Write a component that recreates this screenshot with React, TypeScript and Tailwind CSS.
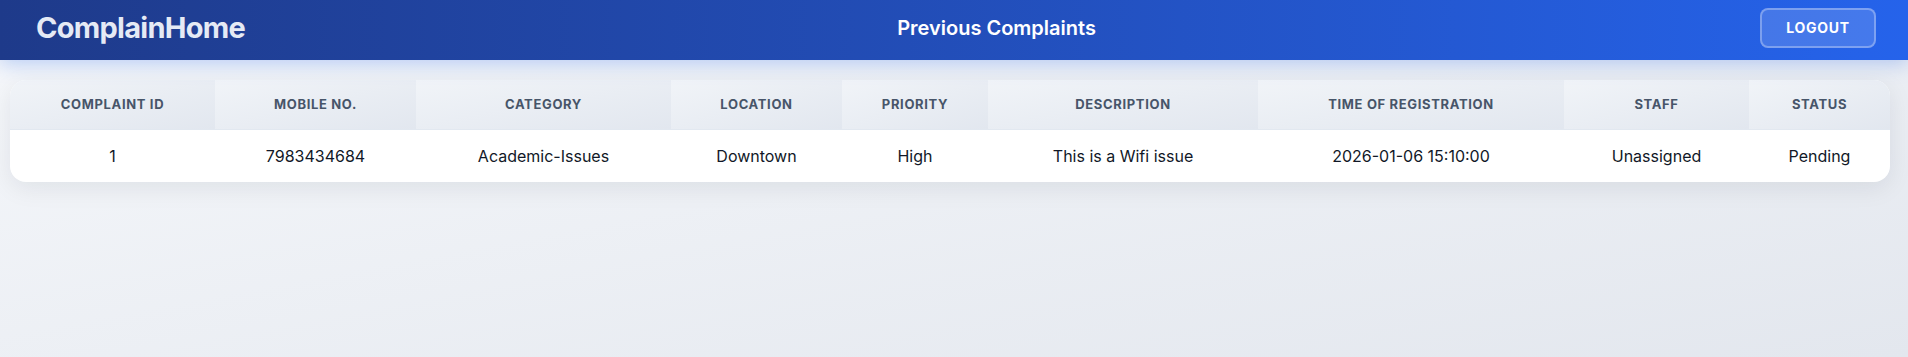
const columns = [
  {label: 'Complaint ID', width: 'w-[205px]'},
  {label: 'Mobile No.', width: 'w-[201px]'},
  {label: 'Category', width: 'w-[255px]'},
  {label: 'Location', width: 'w-[171px]'},
  {label: 'Priority', width: 'w-[146px]'},
  {label: 'Description', width: 'w-[270px]'},
  {label: 'Time of Registration', width: 'w-[306px]'},
  {label: 'Staff', width: 'w-[185px]'},
  {label: 'Status', width: 'w-[141px]'},
];

const complaints = [
  {
    id: 1,
    mobile: '7983434684',
    category: 'Academic-Issues',
    location: 'Downtown',
    priority: 'High',
    description: 'This is a Wifi issue',
    time: '2026-01-06 15:10:00',
    staff: 'Unassigned',
    status: 'Pending',
  },
];

export default function App() {
  return (
    <div className="min-h-screen bg-linear-to-br from-[#f6f8fb] to-[#e3e7ee] font-['Inter',sans-serif]">
      <header className="h-[60px] flex items-center justify-between pl-9 pr-8 pb-1 bg-linear-to-r from-[#1e3a8a] to-[#2563eb] shadow-[0_4px_18px_rgba(37,99,235,0.28)] relative">
        <h1 className="text-[29px] font-bold tracking-tight text-[#e5eaf5]">ComplainHome</h1>
        <h2 className="mr-3 text-xl font-semibold text-white">Previous Complaints</h2>
        <button className="w-[116px] h-10 rounded-lg border-2 border-white/30 bg-white/15 text-white text-sm font-bold tracking-wider">
          LOGOUT
        </button>
      </header>

      <div className="pt-5 pl-[10px]">
        <div className="w-[1880px] rounded-2xl overflow-hidden bg-white shadow-[0_6px_24px_rgba(15,23,42,0.08)]">
          <table className="w-full table-fixed border-collapse">
            <thead>
              <tr>
                {columns.map((col) => (
                  <th
                    key={col.label}
                    className={`${col.width} h-[49px] bg-linear-to-br from-[#f1f4f8] to-[#e2e7ef] border-b border-[#e2e8f0] text-[13px] font-bold uppercase tracking-wider text-[#475569]`}
                  >
                    {col.label}
                  </th>
                ))}
              </tr>
            </thead>
            <tbody>
              {complaints.map((c) => (
                <tr key={c.id} className="h-[53px] text-base text-[#111827] text-center">
                  <td>{c.id}</td>
                  <td>{c.mobile}</td>
                  <td>{c.category}</td>
                  <td>{c.location}</td>
                  <td>{c.priority}</td>
                  <td>{c.description}</td>
                  <td>{c.time}</td>
                  <td>{c.staff}</td>
                  <td>{c.status}</td>
                </tr>
              ))}
            </tbody>
          </table>
        </div>
      </div>
    </div>
  );
}
